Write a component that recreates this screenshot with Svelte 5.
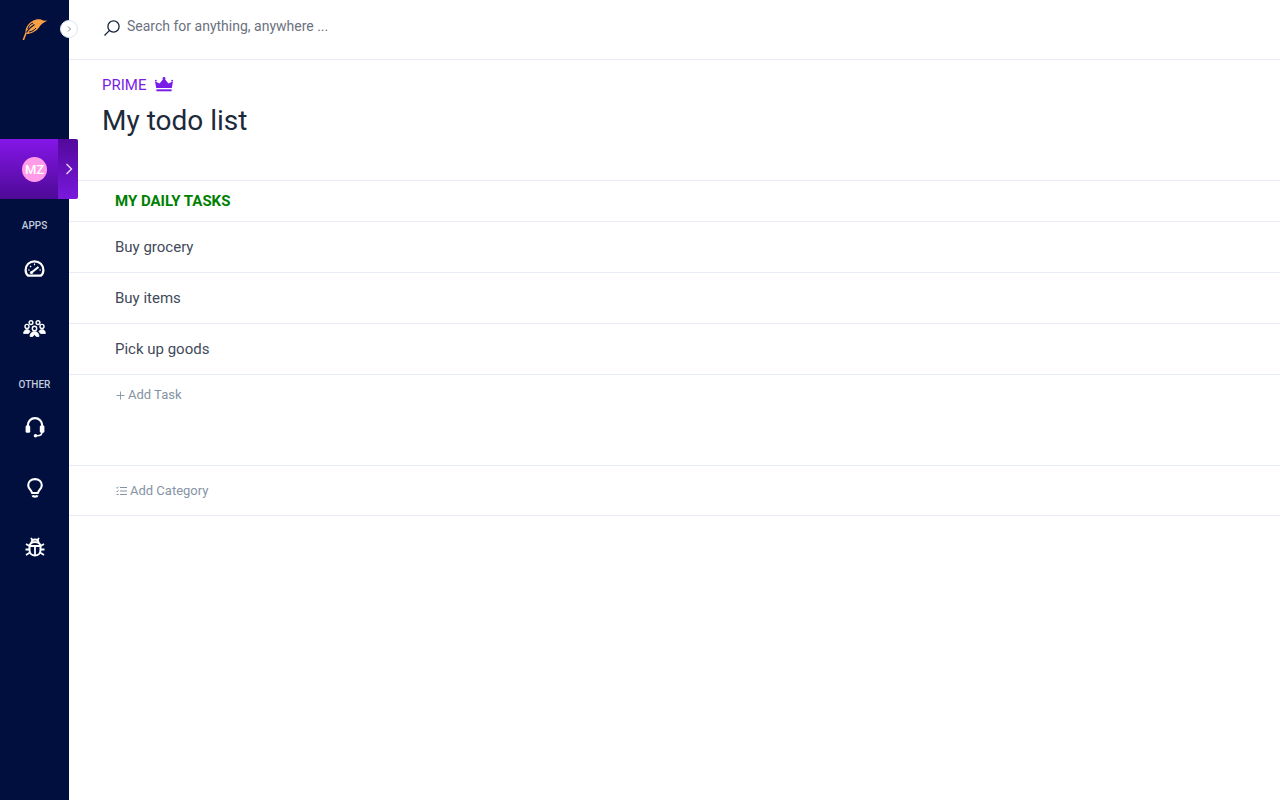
<script>
  const tasks = ['Buy grocery', 'Buy items', 'Pick up goods'];
</script>

<div class="app">
  <aside class="sidebar">
    <div class="logo">
      <svg width="26" height="22" viewBox="0 0 26 22" fill="none">
        <path d="M25.5 2.8 L21 2.6 C18.5 0.6 14 0.8 10.5 3 C6 5.5 3.5 9.5 3.5 14 C3.5 15 3.7 15.6 4 16 C9 16 14 13.5 17 9.5 C18.5 7.5 20 5 25.5 2.8 Z" fill="#f9a044" />
        <path d="M1.5 21 C3 15.5 7 10 12.5 6.5" stroke="#000f3d" stroke-width="1.1" />
        <path d="M1.5 21.5 L4 15" stroke="#f9a044" stroke-width="1.6" stroke-linecap="round" />
        <path d="M6 11 C6 8.5 8 6 11 5 M7 14 C10 13.5 12.5 12 14 10" stroke="#000f3d" stroke-width="1" />
      </svg>
    </div>
    <button class="collapse" aria-label="Collapse">
      <svg width="6" height="8" viewBox="0 0 6 8" fill="none"><path d="M2 1.5 L4.5 4 L2 6.5" stroke="#7b8494" stroke-width="1" /></svg>
    </button>

    <div class="user">
      <div class="user-main"><span class="avatar">MZ</span></div>
      <div class="user-arrow">
        <svg width="8" height="14" viewBox="0 0 8 14" fill="none"><path d="M1.5 2 L6.5 7 L1.5 12" stroke="#e6d8fa" stroke-width="1.4" /></svg>
      </div>
    </div>

    <div class="label first">APPS</div>
    <div class="nav-icon">
      <svg width="21" height="17" viewBox="0 0 20 17" fill="none" stroke="#fff" stroke-width="2.2">
        <path d="M3.6 15.6 C2 14.3 1.1 12.3 1.1 10 C1.1 5 5 1.3 10 1.3 C15 1.3 18.9 5 18.9 10 C18.9 12.3 18 14.3 16.4 15.6 Z" stroke-linejoin="round" />
        <path d="M7 12.5 L14 7" stroke-width="2.2" />
        <circle cx="7" cy="12.5" r="1.6" fill="#fff" stroke="none" />
        <path d="M3.5 10 H5.2 M5.5 6 L6.7 7.2 M10 3.6 V5.2 M14.8 10 H16.5" stroke-width="1.2" />
      </svg>
    </div>
    <div class="nav-icon">
      <svg width="23" height="17" viewBox="0 0 23 17" fill="none" stroke="#fff" stroke-width="1.4">
        <circle cx="8" cy="2.6" r="1.9" />
        <circle cx="15" cy="2.6" r="1.9" />
        <circle cx="4" cy="6.4" r="2" />
        <circle cx="19" cy="6.4" r="2" />
        <circle cx="11.5" cy="8.4" r="2.2" />
        <path d="M0.6 13.5 C0.6 11 2.2 9.6 4 9.6 C5.4 9.6 6.4 10.4 7 11.4 L5.4 13.5 Z" fill="#fff" stroke-width="0.8" />
        <path d="M22.4 13.5 C22.4 11 20.8 9.6 19 9.6 C17.6 9.6 16.6 10.4 16 11.4 L17.6 13.5 Z" fill="#fff" stroke-width="0.8" />
        <path d="M7 16.4 C7 13.6 9 11.6 11.5 11.6 C14 11.6 16 13.6 16 16.4 L13.3 16.6 L11.5 14.4 L9.7 16.6 Z" fill="#fff" stroke-width="0.8" />
      </svg>
    </div>

    <div class="label second">OTHER</div>
    <div class="nav-icon">
      <svg width="20" height="21" viewBox="0 0 20 21" fill="none" stroke="#fff" stroke-width="2.2">
        <path d="M2.8 11 V8.6 C2.8 4.2 6 1.2 10 1.2 C14 1.2 17.2 4.2 17.2 8.6 V11" />
        <rect x="0.6" y="8.4" width="4.6" height="7.4" rx="1.4" fill="#fff" stroke="none" />
        <rect x="14.8" y="8.4" width="4.6" height="7.4" rx="1.4" fill="#fff" stroke="none" />
        <path d="M17 15 C17 17.8 15 18.8 12 18.8" stroke-width="1.5" />
        <circle cx="10.5" cy="18.8" r="1.8" fill="#fff" stroke="none" />
      </svg>
    </div>
    <div class="nav-icon bulb">
      <svg width="16" height="20" viewBox="0 0 16 20" fill="none" stroke="#fff" stroke-width="2.1">
        <path d="M5 15 C5 12.5 1.2 11 1.2 7.2 C1.2 3.6 4.2 1.1 8 1.1 C11.8 1.1 14.8 3.6 14.8 7.2 C14.8 11 11 12.5 11 15 Z" stroke-linejoin="round" />
        <path d="M5.5 17.4 C6 18.9 10 18.9 10.5 17.4" stroke-width="2.2" />
      </svg>
    </div>
    <div class="nav-icon">
      <svg width="20" height="20" viewBox="0 0 20 20" fill="none" stroke="#fff" stroke-width="1.8">
        <path d="M4.5 10 C4.5 6.5 7 5 10 5 C13 5 15.5 6.5 15.5 10 V13 C15.5 16.5 13 18.5 10 18.5 C7 18.5 4.5 16.5 4.5 13 Z" stroke-width="2" />
        <path d="M4.5 9 H15.5 M10 9 V18" />
        <path d="M6.5 5.5 C6.5 3.5 8 2.5 10 2.5 C12 2.5 13.5 3.5 13.5 5.5" />
        <path d="M6 1 L7.5 3 M14 1 L12.5 3 M1 7 L4.5 9 M19 7 L15.5 9 M0.5 12.5 H4.5 M19.5 12.5 H15.5 M1 18 L5 15.5 M19 18 L15 15.5" />
      </svg>
    </div>
  </aside>

  <main class="main">
    <header class="search">
      <svg width="18" height="18" viewBox="0 0 18 18" fill="none">
        <circle cx="10.5" cy="7.5" r="5.6" stroke="#14233c" stroke-width="1.3" />
        <path d="M6.3 11.6 L1.5 16.5" stroke="#14233c" stroke-width="1.3" />
      </svg>
      <span>Search for anything, anywhere ...</span>
    </header>

    <section class="heading">
      <div class="prime">
        <span>PRIME</span>
        <svg width="18" height="15" viewBox="0 0 18 15">
          <path d="M1.2 11 L0 4.2 L4.6 6.5 L9 1 L13.4 6.5 L18 4.2 L16.8 11 Z" fill="#7a1ce8" />
          <circle cx="9" cy="1.4" r="1.4" fill="#7a1ce8" />
          <circle cx="0.9" cy="3.6" r="0.9" fill="#7a1ce8" />
          <circle cx="17.1" cy="3.6" r="0.9" fill="#7a1ce8" />
          <rect x="1.4" y="12.3" width="15.2" height="2" fill="#7a1ce8" />
        </svg>
      </div>
      <h1>My todo list</h1>
    </section>

    <div class="row category">MY DAILY TASKS</div>
    {#each tasks as task}
      <div class="row task">{task}</div>
    {/each}
    <div class="add-task">
      <svg width="9" height="9" viewBox="0 0 9 9" fill="none"><path d="M4.5 0.5 V8.5 M0.5 4.5 H8.5" stroke="#8f9cae" stroke-width="1" /></svg>
      <span>Add Task</span>
    </div>
    <div class="add-category">
      <svg width="11" height="10" viewBox="0 0 11 10" fill="none" stroke="#8593a5" stroke-width="1">
        <path d="M4 1.5 H11 M4 5 H11 M4 8.5 H11" />
        <path d="M0.5 1.5 L1.3 2.3 L2.6 0.7 M0.5 5 L1.3 5.8 L2.6 4.2 M0.5 8.5 H2.5" />
      </svg>
      <span>Add Category</span>
    </div>
  </main>
</div>

<style>
  :global(body) {
    margin: 0;
    background: #fff;
  }

  .app {
    display: flex;
    min-height: 800px;
    font-family: Roboto, "Liberation Sans", sans-serif;
  }

  .sidebar {
    position: relative;
    flex: 0 0 69px;
    width: 69px;
    background: #000f3d;
    display: flex;
    flex-direction: column;
    align-items: center;
  }

  .logo {
    height: 139px;
    width: 100%;
    display: flex;
    justify-content: center;
    align-items: flex-start;
    padding-top: 18px;
    box-sizing: border-box;
  }

  .collapse {
    position: absolute;
    left: 60px;
    top: 20px;
    width: 18px;
    height: 18px;
    padding: 0;
    border: 1px solid #dde5f0;
    border-radius: 50%;
    background: #fff;
    display: flex;
    align-items: center;
    justify-content: center;
  }

  .user {
    align-self: flex-start;
    width: 78px;
    height: 60px;
    display: flex;
    position: relative;
    z-index: 1;
    border-radius: 0 2px 2px 0;
    overflow: hidden;
  }

  .user-main {
    width: 58px;
    background: linear-gradient(180deg, #8516e8, #4d0a96);
    display: flex;
    align-items: center;
    justify-content: flex-end;
    padding-right: 11px;
    box-sizing: border-box;
  }

  .avatar {
    width: 25px;
    height: 25px;
    border-radius: 50%;
    background: #ff9be8;
    color: #fff;
    font-size: 13px;
    font-weight: 500;
    display: flex;
    align-items: center;
    justify-content: center;
  }

  .user-arrow {
    flex: 1;
    padding-left: 2px;
    background: linear-gradient(180deg, #52099c, #7a18dc);
    display: flex;
    align-items: center;
    justify-content: center;
  }

  .label {
    font-size: 10px;
    font-weight: 500;
    line-height: 12px;
    color: #c3cbdd;
    text-align: center;
  }

  .label.first {
    margin-top: 21px;
    margin-bottom: 6px;
  }

  .label.second {
    margin-top: 21px;
    margin-bottom: 6px;
  }

  .nav-icon {
    height: 60px;
    width: 100%;
    display: flex;
    align-items: center;
    justify-content: center;
  }

  .bulb {
    padding-top: 1px;
    box-sizing: border-box;
  }

  .main {
    flex: 1;
    min-width: 0;
  }

  .search {
    height: 60px;
    box-sizing: border-box;
    border-bottom: 1px solid #e8edf5;
    padding: 0 0 4px 34px;
    display: flex;
    align-items: center;
    gap: 6px;
    font-size: 14px;
    color: #6b7280;
  }

  .search span {
    margin-bottom: 4px;
  }

  .heading {
    height: 121px;
    padding: 16px 0 0 33px;
    box-sizing: border-box;
    border-bottom: 1px solid #e8edf5;
  }

  .prime {
    display: flex;
    align-items: center;
    gap: 9px;
    color: #7a1ce8;
    font-size: 15px;
    line-height: 18px;
  }

  .prime svg {
    margin-bottom: 2px;
  }

  h1 {
    margin: 9px 0 0;
    font-size: 28px;
    line-height: 36px;
    font-weight: 400;
    color: #1c2a3a;
  }

  .row {
    box-sizing: border-box;
    padding-left: 46px;
    border-bottom: 1px solid #e8edf5;
    display: flex;
    align-items: center;
  }

  .category {
    height: 41px;
    font-size: 15px;
    font-weight: 700;
    color: #008000;
  }

  .task {
    height: 51px;
    font-size: 15px;
    color: #3f4a5a;
  }

  .add-task {
    height: 91px;
    box-sizing: border-box;
    padding: 13px 0 0 47px;
    border-bottom: 1px solid #e8edf5;
    display: flex;
    align-items: flex-start;
    gap: 3px;
    font-size: 13px;
    line-height: 14px;
    color: #8593a5;
  }

  .add-task svg {
    margin-top: 3px;
  }

  .add-category {
    height: 50px;
    box-sizing: border-box;
    padding-left: 47px;
    border-bottom: 1px solid #e8edf5;
    display: flex;
    align-items: center;
    gap: 3px;
    font-size: 13px;
    color: #8593a5;
  }
</style>
